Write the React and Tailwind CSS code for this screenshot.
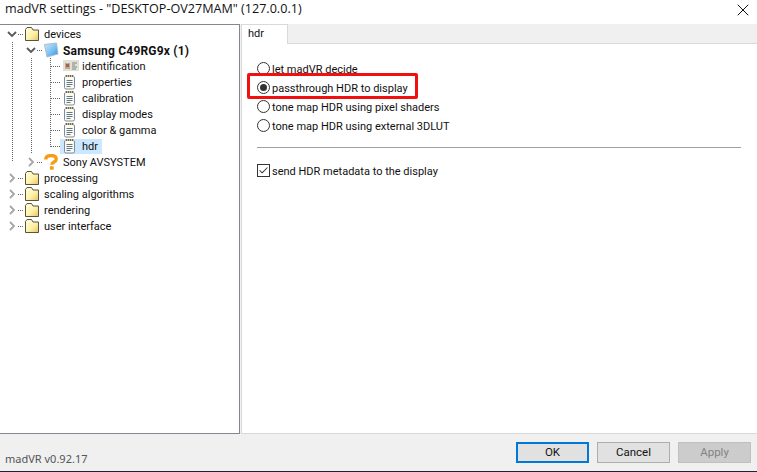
import { Check, X } from "lucide-react";

const treeFont = { fontFamily: 'Roboto, sans-serif' };

function Folder() {
  return (
    <svg width="16" height="16" viewBox="0 0 16 16">
      <defs>
        <linearGradient id="folderFill" x1="0" y1="0" x2="1" y2="1">
          <stop offset="0" stopColor="#fffee6" />
          <stop offset="0.55" stopColor="#fdf2a6" />
          <stop offset="1" stopColor="#e8c26a" />
        </linearGradient>
      </defs>
      <path d="M1.5 14.5V3.5L3 1.5h4.5l1.5 2.5h5.5v10.5z" fill="url(#folderFill)" stroke="#56533f" />
    </svg>
  );
}

function Monitor() {
  return (
    <svg width="16" height="16" viewBox="0 0 16 16">
      <defs>
        <linearGradient id="monitorFill" x1="0" y1="0" x2="1" y2="1">
          <stop offset="0" stopColor="#cfeafb" />
          <stop offset="0.55" stopColor="#79c1f3" />
          <stop offset="1" stopColor="#2a8fe4" />
        </linearGradient>
      </defs>
      <path d="M1.5 2.5 13.5 1 15 12 4 15z" fill="url(#monitorFill)" stroke="#a8bccb" />
    </svg>
  );
}

function Note() {
  return (
    <svg width="14" height="16" viewBox="0 0 14 16">
      <rect x="1.5" y="2.5" width="10" height="12.5" rx="1.5" fill="#fbfbf6" stroke="#7b8aa5" />
      <path d="M2 1h9v2H2z" fill="#c9b98c" />
      <path d="M3.5 1v2M5.5 1v2M7.5 1v2M9.5 1v2" stroke="#6f6a55" />
      <path d="M3.5 6.5h6M3.5 8.5h6M3.5 10.5h6M3.5 12.5h4" stroke="#6b7480" />
    </svg>
  );
}

function IdCard() {
  return (
    <svg width="16" height="16" viewBox="0 0 16 16">
      <rect x="0" y="2" width="16" height="11" fill="#dfe0d6" />
      <rect x="2" y="5" width="5" height="6" fill="#c9a48f" />
      <rect x="3" y="6" width="3" height="3" fill="#a5614f" />
      <path d="M9 5h5M9 7h3M9 9h5M9 11h4" stroke="#7d8780" />
    </svg>
  );
}

function Question() {
  return (
    <svg width="16" height="16" viewBox="0 0 16 16">
      <path d="M2.8 5.5C2.8 2.8 5.2 1.6 8 1.6c3 0 5.2 1.3 5.2 3.6 0 3-4.4 2.7-4.4 5.5" fill="none" stroke="#f49d17" strokeWidth="3.4" />
      <rect x="6.9" y="12.2" width="3.8" height="3.5" fill="#f49d17" />
    </svg>
  );
}

function Chevron({ open }) {
  return (
    <svg width="10" height="10" viewBox="0 0 10 10" className="absolute top-[3px]">
      {open ? (
        <path d="M1 3 5 7 9 3" fill="none" stroke="#595959" strokeWidth="1.8" />
      ) : (
        <path d="M3 1 7 5 3 9" fill="none" stroke="#a6a6a6" strokeWidth="1.8" />
      )}
    </svg>
  );
}

// dotted tree connectors, x values are relative to the tree panel
function Guides({ width, lines, elbow, chevron }) {
  return (
    <div className="relative h-4 shrink-0" style={{ width }}>
      <svg width={width} height="16" className="absolute left-0 top-0">
        {lines.map((l) => (
          <path key={l.x} d={`M${l.x + 0.5} ${l.from ?? 0}V${l.to ?? 16}`} stroke="#666" strokeDasharray="1 1" />
        ))}
        {elbow && <path d={`M${elbow.x} 8.5H${elbow.to}`} stroke="#666" strokeDasharray="1 1" />}
      </svg>
      {chevron && (
        <div className="absolute top-0" style={{ left: width - 17 }}>
          <Chevron open={chevron === "open"} />
        </div>
      )}
    </div>
  );
}

function TreeRow({ width, lines = [], elbow, chevron, icon, label, bold, selected, iconBox = "w-[20px]" }) {
  return (
    <div className="flex h-4 items-center">
      <Guides width={width} lines={lines} elbow={elbow} chevron={chevron} />
      <div className={`flex h-[15px] items-center pr-[4px] ${selected ? "bg-[#cce8ff]" : ""}`}>
        <div className={`flex shrink-0 items-center ${iconBox}`}>{icon}</div>
        <span
          className={`whitespace-nowrap pt-[1px] leading-none text-[#111] ${bold ? "text-[12px] font-bold tracking-[0.2px]" : "text-[11px]"}`}
          style={treeFont}
        >
          {label}
        </span>
      </div>
    </div>
  );
}

function Tree() {
  const leaf = (label, icon, opts = {}) => (
    <TreeRow
      width={59}
      lines={[{ x: 11 }, { x: 30 }, { x: 49, to: opts.last ? 9 : 16 }]}
      elbow={{ x: 50, to: 59 }}
      icon={icon}
      label={label}
      selected={opts.selected}
      iconBox="w-[22px] pl-[3px]"
    />
  );
  return (
    <div className="h-full w-[240px] shrink-0 border-y border-r border-[#828790] bg-white pl-[1px] pt-[1px]">
      <TreeRow width={23} elbow={{ x: 17, to: 23 }} chevron="open" icon={<Folder />} label="devices" />
      <TreeRow width={42} lines={[{ x: 11 }]} elbow={{ x: 36, to: 42 }} chevron="open" icon={<Monitor />} label="Samsung C49RG9x (1)" bold />
      {leaf("identification", <IdCard />)}
      {leaf("properties", <Note />)}
      {leaf("calibration", <Note />)}
      {leaf("display modes", <Note />)}
      {leaf("color & gamma", <Note />)}
      {leaf("hdr", <Note />, { selected: true, last: true })}
      <TreeRow width={42} lines={[{ x: 11, to: 8 }]} elbow={{ x: 36, to: 42 }} chevron="closed" icon={<Question />} label="Sony AVSYSTEM" />
      <TreeRow width={23} elbow={{ x: 17, to: 23 }} chevron="closed" icon={<Folder />} label="processing" />
      <TreeRow width={23} elbow={{ x: 17, to: 23 }} chevron="closed" icon={<Folder />} label="scaling algorithms" />
      <TreeRow width={23} elbow={{ x: 17, to: 23 }} chevron="closed" icon={<Folder />} label="rendering" />
      <TreeRow width={23} elbow={{ x: 17, to: 23 }} chevron="closed" icon={<Folder />} label="user interface" />
    </div>
  );
}

function Radio({ label, checked, highlight }) {
  return (
    <div className="relative flex h-[19px] items-center gap-[2px]">
      <div className="flex h-[13px] w-[13px] shrink-0 items-center justify-center rounded-full border border-[#333] bg-white">
        {checked && <div className="h-[7px] w-[7px] rounded-full bg-[#333]" />}
      </div>
      <span className="whitespace-nowrap pt-[1px] text-[11px] leading-none text-[#111]" style={treeFont}>
        {label}
      </span>
      {highlight && <div className="absolute left-[-10px] top-[-5px] h-[26px] w-[171px] rounded-[2px] border-[3px] border-[#f01010]" />}
    </div>
  );
}

function Button({ label, variant }) {
  const styles = {
    primary: "border-2 border-[#0078d7] bg-[#e1e1e1] text-[#111]",
    normal: "border border-[#adadad] bg-[#e1e1e1] text-[#111]",
    disabled: "border border-[#bfbfbf] bg-[#cccccc] text-[#838383]",
  };
  return (
    <div className={`flex h-[21px] w-[73px] items-center justify-center text-[11.5px] ${styles[variant]}`} style={treeFont}>
      {label}
    </div>
  );
}

export default function App() {
  return (
    <div className="flex h-[472px] w-[757px] flex-col overflow-hidden border-b border-[#1c2433] bg-[#f0f0f0]">
      <div className="flex h-[24px] shrink-0 items-center justify-between bg-white pl-[5px] pr-[4px]">
        <span className="whitespace-nowrap pb-[5px] text-[12.6px] leading-none text-[#111]" style={{ fontFamily: '"Open Sans", sans-serif' }}>
          madVR settings - "DESKTOP-OV27MAM" (127.0.0.1)
        </span>
        <X size={20} strokeWidth={1.2} color="#111" className="mb-[4px]" />
      </div>
      <div className="flex h-[410px] shrink-0">
        <Tree />
        <div className="flex min-w-0 flex-1 flex-col pl-[1px]">
          <div className="flex h-[20px] shrink-0 items-stretch">
            <div className="w-[47px] border border-b-0 border-[#d9d9d9] bg-white pl-[6px] pt-[3px] text-[11px] leading-none text-[#111]" style={treeFont}>
              hdr
            </div>
            <div className="flex-1 border-b border-[#d9d9d9]" />
          </div>
          <div className="flex-1 border-b border-l border-[#d9d9d9] bg-white pl-[15px] pr-[16px] pt-[15px]">
            <Radio label="let madVR decide" />
            <Radio label="passthrough HDR to display" checked highlight />
            <Radio label="tone map HDR using pixel shaders" />
            <Radio label="tone map HDR using external 3DLUT" />
            <div className="mt-[12px] h-[1px] bg-[#a0a0a0]" />
            <div className="mt-[13px] flex h-[19px] items-center gap-[2px]">
              <div className="flex h-[13px] w-[13px] shrink-0 items-center justify-center border border-[#333] bg-white">
                <Check size={11} strokeWidth={2.2} color="#333" />
              </div>
              <span className="whitespace-nowrap pt-[1px] text-[11px] leading-none text-[#111]" style={treeFont}>
                send HDR metadata to the display
              </span>
            </div>
          </div>
        </div>
      </div>
      <div className="flex flex-1 items-center justify-between pl-[5px] pr-[6px]">
        <span className="pt-[11px] text-[11px] leading-none text-[#555]" style={{ fontFamily: '"Noto Sans", sans-serif' }}>
          madVR v0.92.17
        </span>
        <div className="flex gap-[8px]">
          <Button label="OK" variant="primary" />
          <Button label="Cancel" variant="normal" />
          <Button label="Apply" variant="disabled" />
        </div>
      </div>
    </div>
  );
}
